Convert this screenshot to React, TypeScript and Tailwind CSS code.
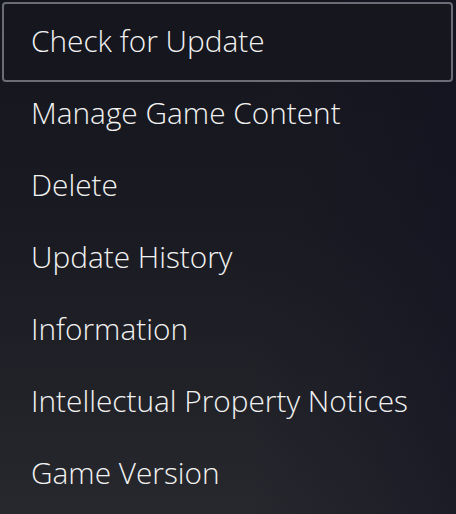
import React from "react";

const items = [
  "Check for Update",
  "Manage Game Content",
  "Delete",
  "Update History",
  "Information",
  "Intellectual Property Notices",
  "Game Version",
];

export default function App() {
  return (
    <div className="relative w-[456px] h-[514px] overflow-hidden bg-[linear-gradient(to_bottom,#15161d_0%,#1a1b22_45%,#27282d_100%)]">
      <div className="absolute inset-0 bg-[linear-gradient(to_right,rgba(0,0,0,0)_55%,rgba(18,18,34,0.55)_100%)]" />
      <ul className="relative flex flex-col pt-[5px]" style={{ fontFamily: '"Open Sans", "Noto Sans", sans-serif' }}>
        {items.map((t, i) => (
          <li key={t} className="relative h-[72px] flex items-center pl-[31px]">
            {i === 0 && (
              <div className="absolute left-[2px] right-[3px] -top-[3px] -bottom-[5px] rounded-[4px] border-2 border-[#6a6d76] bg-[#15161e]" />
            )}
            <span className="relative text-[29.8px] font-light text-[#f2f2f2] leading-none">{t}</span>
          </li>
        ))}
      </ul>
    </div>
  );
}
